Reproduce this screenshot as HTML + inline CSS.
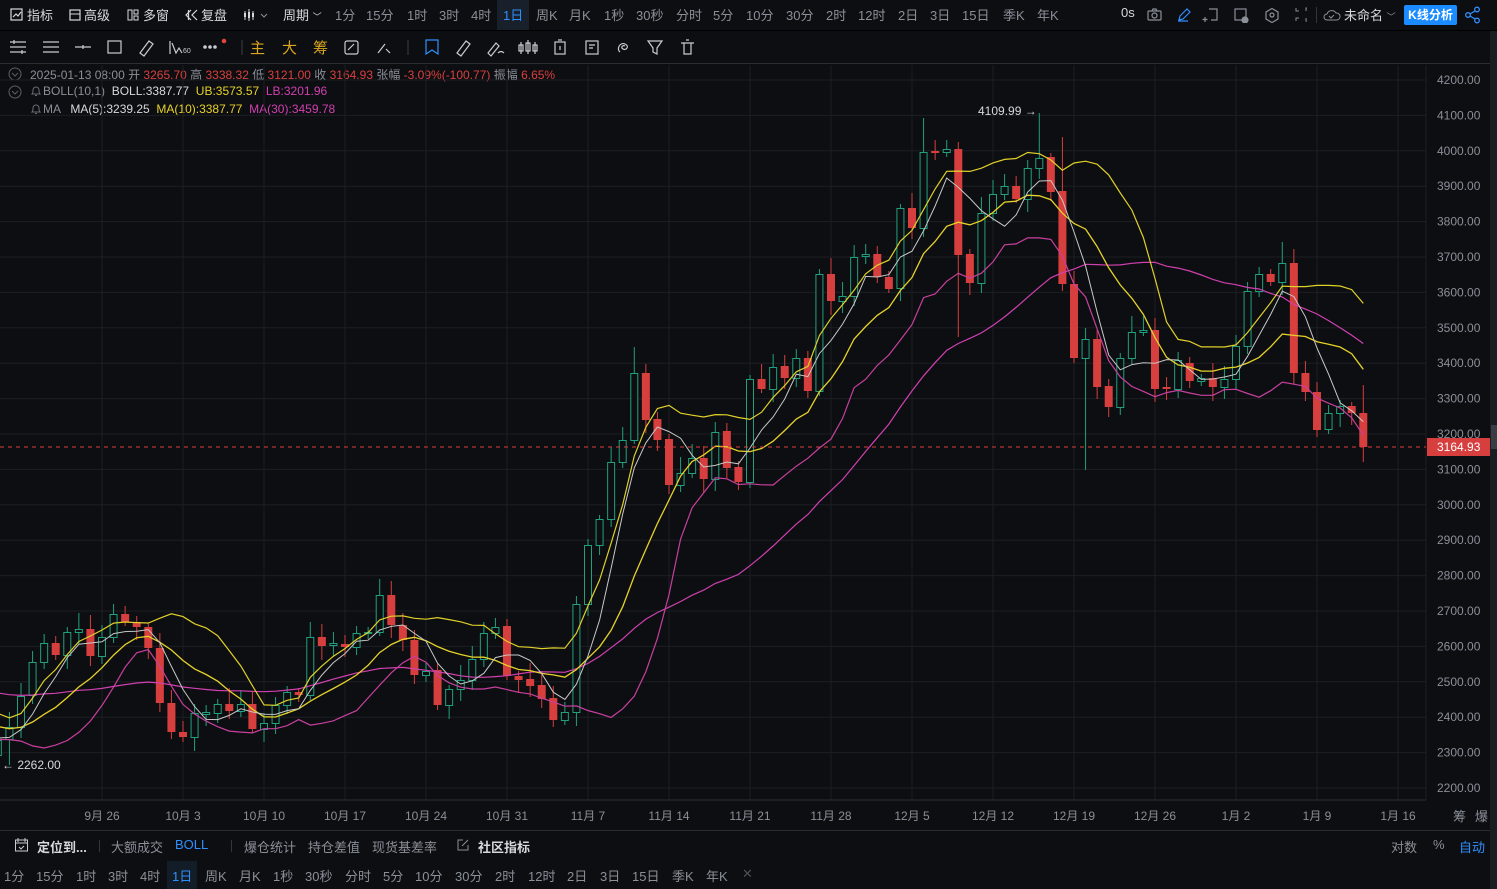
<!DOCTYPE html>
<html><head><meta charset="utf-8">
<style>
*{margin:0;padding:0;box-sizing:border-box}
body{width:1497px;height:889px;background:#0d0e11;font-family:"Liberation Sans","Noto Sans CJK SC",sans-serif;color:#8a8f98;overflow:hidden;position:relative}
.a{position:absolute;white-space:nowrap}
.t{font-size:13px;top:5px;color:#8a8f98}
.w{color:#d5d8dd}
.b{font-size:13px;top:866px;color:#8a8f98}
#topb{position:absolute;left:0;top:0;width:1497px;height:31px;border-bottom:1px solid #000;background:#0d0e11}
#tool{position:absolute;left:0;top:31px;width:1490px;height:33px;border-bottom:1px solid #2a2d33}
</style></head><body>
<div id="topb"></div>
<div id="tool"></div>
<div class="a" style="left:1490px;top:31px;width:7px;height:858px;background:#1b1d22"></div>
<div class="a" style="left:1491px;top:425px;width:6px;height:24px;background:#3a3d44"></div>

<!-- top bar -->
<svg class="a" style="left:10px;top:8px" width="14" height="14"><rect x="1" y="1" width="11" height="11" fill="none" stroke="#d5d8dd" stroke-width="1.2"/><path d="M3 9l3-3 2 2 3-4" fill="none" stroke="#d5d8dd" stroke-width="1.2"/></svg>
<div class="a t w" style="left:27px">指标</div>
<svg class="a" style="left:69px;top:8px" width="13" height="14"><rect x="1" y="2" width="10" height="10" fill="none" stroke="#d5d8dd" stroke-width="1.2"/><path d="M1 6h10" stroke="#d5d8dd"/></svg>
<div class="a t w" style="left:84px">高级</div>
<svg class="a" style="left:127px;top:8px" width="13" height="14"><rect x="1" y="2" width="4" height="10" fill="none" stroke="#d5d8dd"/><rect x="7" y="2" width="4" height="4" fill="none" stroke="#d5d8dd"/><rect x="7" y="8" width="4" height="4" fill="none" stroke="#d5d8dd"/></svg>
<div class="a t w" style="left:143px">多窗</div>
<svg class="a" style="left:185px;top:9px" width="14" height="12" fill="none" stroke="#d5d8dd" stroke-width="1.2"><path d="M6 1L1 6l5 5M12 1L7 6l5 5M3.5 1v10"/></svg>
<div class="a t w" style="left:201px">复盘</div>
<svg class="a" style="left:243px;top:8px" width="28" height="14"><path d="M2 3v9M6 1v12M10 3v9" stroke="#d5d8dd"/><rect x="1" y="5" width="2" height="4" fill="#d5d8dd"/><rect x="5" y="4" width="2" height="6" fill="#d5d8dd"/><rect x="9" y="5" width="2" height="4" fill="#d5d8dd"/><path d="M18 6l3 3 3-3" fill="none" stroke="#8a8f98"/></svg>
<div class="a t w" style="left:283px">周期 <span style="font-size:9px">﹀</span></div>
<div class="a t" style="left:335px">1分</div><div class="a t" style="left:366px">15分</div><div class="a t" style="left:407px">1时</div><div class="a t" style="left:439px">3时</div><div class="a t" style="left:471px">4时</div>
<div class="a" style="left:497px;top:0;width:32px;height:30px;background:#17202b"></div>
<div class="a t" style="left:503px;color:#2f8fff">1日</div>
<div class="a t" style="left:536px">周K</div><div class="a t" style="left:569px">月K</div><div class="a t" style="left:604px">1秒</div><div class="a t" style="left:636px">30秒</div><div class="a t" style="left:676px">分时</div><div class="a t" style="left:713px">5分</div><div class="a t" style="left:746px">10分</div><div class="a t" style="left:786px">30分</div><div class="a t" style="left:826px">2时</div><div class="a t" style="left:858px">12时</div><div class="a t" style="left:898px">2日</div><div class="a t" style="left:930px">3日</div><div class="a t" style="left:962px">15日</div><div class="a t" style="left:1003px">季K</div><div class="a t" style="left:1037px">年K</div>
<div class="a t w" style="left:1121px">0s</div>
<svg class="a" style="left:1147px;top:7px" width="160" height="16" fill="none" stroke="#8a8f98" stroke-width="1.2">
<rect x="1" y="4" width="13" height="9" rx="1"/><circle cx="7.5" cy="8.5" r="2.5"/><path d="M5 4l1-2h3l1 2"/>
<path d="M32 13l1-4 7-7 3 3-7 7z M31 14h10" stroke="#2f8fff"/>
<path d="M62 2h8v11h-6M58 10v5M55.5 12.5h5"/>
<rect x="88" y="2" width="11" height="11"/><circle cx="98" cy="13" r="3" fill="#8a8f98"/>
<path d="M125 1.5l6 3.5v7l-6 3.5-6-3.5v-7z"/><circle cx="125" cy="8" r="2"/>
<path d="M149 1v3h3M162 1h-3v3M149 14v-3h3M162 14h-3v-3" stroke-width="1"/>
</svg>
<div class="a" style="left:1316px;top:7px;width:1px;height:16px;background:#33363c"></div>
<svg class="a" style="left:1323px;top:9px" width="18" height="12"><path d="M4 11a3 3 0 010-6 5 5 0 019-1 3.5 3.5 0 011 7z" fill="none" stroke="#8a8f98"/><path d="M6 7l2 2 3-3" fill="none" stroke="#8a8f98"/></svg>
<div class="a t w" style="left:1344px">未命名 <span style="font-size:9px;color:#8a8f98">﹀</span></div>
<div class="a" style="left:1404px;top:5px;width:53px;height:20px;background:#1a8cff;border-radius:2px;color:#fff;font-size:12px;font-weight:bold;line-height:20px;text-align:center">K线分析</div>
<svg class="a" style="left:1464px;top:6px" width="18" height="18" fill="none" stroke="#2f8fff" stroke-width="1.3"><circle cx="13" cy="3.5" r="2.3"/><circle cx="4" cy="9" r="2.3"/><circle cx="13" cy="14.5" r="2.3"/><path d="M6 8l5-3M6 10l5 3"/></svg>

<!-- toolbar -->
<svg class="a" style="left:0;top:36px" width="700" height="22" fill="none" stroke="#c8ccd2" stroke-width="1.2">
<path d="M10 6h16M10 11h16M10 16h16M14 4v4M22 14v4"/>
<path d="M43 6h16M43 11h16M43 16h16"/>
<path d="M75 11h16M83 9v4"/>
<rect x="108" y="5" width="13" height="12"/>
<path d="M140 17l9-12 4 3-9 12z"/>
<path d="M170 5v13M172 7l4 10 3-5 3 5"/><text x="183" y="17" font-size="7" fill="#c8ccd2" stroke="none">60</text>
<circle cx="205" cy="11" r="1.2" fill="#c8ccd2"/><circle cx="210" cy="11" r="1.2" fill="#c8ccd2"/><circle cx="215" cy="11" r="1.2" fill="#c8ccd2"/>
<circle cx="224" cy="5" r="2.3" fill="#e0443e" stroke="none"/>
<path d="M242 4v15" stroke="#33363c"/>
<text x="250" y="17" font-size="15" fill="#d9a520" stroke="none" font-family="Noto Sans CJK SC">主</text>
<text x="282" y="17" font-size="15" fill="#d9a520" stroke="none" font-family="Noto Sans CJK SC">大</text>
<text x="313" y="17" font-size="15" fill="#d9a520" stroke="none" font-family="Noto Sans CJK SC">筹</text>
<rect x="345" y="5" width="13" height="13" rx="2"/><path d="M348 14l6-6"/>
<path d="M378 17l7-9M386 13l4 4"/>
<path d="M408 4v15" stroke="#33363c"/>
<path d="M426 4h12v14l-6-4-6 4z" stroke="#2f8fff"/>
<path d="M457 17l9-12 4 3-9 12z"/>
<path d="M488 17l8-10 3 3-8 10zM498 17c2-2 4-2 6 0"/>
<path d="M521 6v12M528 4v14M535 6v12"/><rect x="519" y="9" width="4" height="6"/><rect x="526" y="7" width="4" height="8"/><rect x="533" y="9" width="4" height="6"/>
<rect x="555" y="6" width="10" height="12"/><path d="M558 4h4M560 10v4"/>
<rect x="586" y="5" width="12" height="13"/><path d="M589 9h6M589 12h4"/>
<path d="M620 16c-4-3 0-10 5-8s1 7-2 5 0-4 2-3"/>
<path d="M648 5h14l-5 7v6l-4-2v-4z"/>
<path d="M681 7h13M684 7v11h7V7M686 4h3"/>
</svg>

<!-- legend -->
<svg class="a" style="left:8px;top:67px" width="16" height="42" fill="none" stroke="#5a5e66"><circle cx="7" cy="7" r="6"/><path d="M4 6l3 3 3-3"/><circle cx="7" cy="25" r="6"/><path d="M4 24l3 3 3-3"/></svg>
<svg class="a" style="left:30px;top:85px" width="12" height="30" fill="none" stroke="#6a6e76"><path d="M2 9c1-1 1-2 1-4a3 3 0 016 0c0 2 0 3 1 4zM5 10.5h2"/><path d="M2 27c1-1 1-2 1-4a3 3 0 016 0c0 2 0 3 1 4zM5 28.5h2"/></svg>
<div class="a" style="left:30px;top:66px;font-size:12px;color:#8a8f98">2025-01-13 08:00 开 <span style="color:#d9403f">3265.70</span> 高 <span style="color:#d9403f">3338.32</span> 低 <span style="color:#d9403f">3121.00</span> 收 <span style="color:#d9403f">3164.93</span> 张幅 <span style="color:#d9403f">-3.09%(-100.77)</span> 振幅 <span style="color:#d9403f">6.65%</span></div>
<div class="a" style="left:43px;top:84px;font-size:12px;color:#8a8f98">BOLL(10,1) &nbsp;<span style="color:#d5d8dd">BOLL:3387.77</span> &nbsp;<span style="color:#e6d22a">UB:3573.57</span> &nbsp;<span style="color:#d040b0">LB:3201.96</span></div>
<div class="a" style="left:43px;top:102px;font-size:12px;color:#8a8f98">MA &nbsp;&nbsp;<span style="color:#d5d8dd">MA(5):3239.25</span> &nbsp;<span style="color:#e6d22a">MA(10):3387.77</span> &nbsp;<span style="color:#d040b0">MA(30):3459.78</span></div>

<svg id="ch" class="a" style="left:0;top:65px" width="1490" height="765"></svg>

<!-- bottom -->
<div class="a" style="left:0;top:830px;width:1490px;height:1px;background:#2a2d33"></div>
<svg class="a" style="left:14px;top:837px" width="16" height="16" fill="none" stroke="#c8ccd2"><rect x="1.5" y="3" width="12" height="11"/><path d="M4 1v4M11 1v4M1.5 6h12M5 10l2 2 3-3"/></svg>
<div class="a" style="left:37px;top:837px;font-size:13px;font-weight:bold;color:#d5d8dd">定位到...</div>
<div class="a" style="left:99px;top:840px;width:1px;height:12px;background:#33363c"></div>
<div class="a" style="left:111px;top:837px;font-size:13px">大额成交</div>
<div class="a" style="left:175px;top:837px;font-size:13px;color:#2f8fff">BOLL</div>
<div class="a" style="left:231px;top:840px;width:1px;height:12px;background:#33363c"></div>
<div class="a" style="left:244px;top:837px;font-size:13px">爆仓统计</div>
<div class="a" style="left:308px;top:837px;font-size:13px">持仓差值</div>
<div class="a" style="left:372px;top:837px;font-size:13px">现货基差率</div>
<svg class="a" style="left:457px;top:839px" width="12" height="12" fill="none" stroke="#8a8f98"><path d="M6 1H1v10h10V6M5 7l6-6"/></svg>
<div class="a" style="left:478px;top:837px;font-size:13px;font-weight:bold;color:#d5d8dd">社区指标</div>
<div class="a" style="left:1391px;top:837px;font-size:13px">对数</div>
<div class="a" style="left:1433px;top:837px;font-size:13px">%</div>
<div class="a" style="left:1459px;top:837px;font-size:13px;color:#2f8fff">自动</div>
<div class="a" style="left:167px;top:861px;width:30px;height:28px;background:#131d27"></div>
<div class="a b" style="left:4px">1分</div><div class="a b" style="left:36px">15分</div><div class="a b" style="left:76px">1时</div><div class="a b" style="left:108px">3时</div><div class="a b" style="left:140px">4时</div><div class="a b" style="left:172px;color:#2f8fff">1日</div><div class="a b" style="left:205px">周K</div><div class="a b" style="left:239px">月K</div><div class="a b" style="left:273px">1秒</div><div class="a b" style="left:305px">30秒</div><div class="a b" style="left:345px">分时</div><div class="a b" style="left:383px">5分</div><div class="a b" style="left:415px">10分</div><div class="a b" style="left:455px">30分</div><div class="a b" style="left:495px">2时</div><div class="a b" style="left:528px">12时</div><div class="a b" style="left:567px">2日</div><div class="a b" style="left:600px">3日</div><div class="a b" style="left:632px">15日</div><div class="a b" style="left:672px">季K</div><div class="a b" style="left:706px">年K</div><div class="a b" style="left:742px;color:#4a4e56">✕</div>

<script>
const T=65;
const D=[
['g',740,755],['g',727,739],['g',696,727],['g',662,695],['g',643,662],['r',643,655],['g',632,655],['g',629,632],['r',629,656],['g',637,656],
['g',614,637],['r',614,622],['r',622,627],['r',627,648],['r',648,703],['r',703,732],['r',732,737],['g',713,737],['g',712,714],['g',704,713],
['r',704,711],['g',704,711],['r',704,729],['g',723,729],['g',705,723],['g',692,705],['r',692,695],['g',637,695],['r',637,646],['g',643,645],
['r',644,647],['g',633,647],['g',632,633],['g',595,632],['r',595,625],['r',625,640],['r',640,675],['g',671,675],['r',670,705],['g',689,705],
['g',680,689],['g',659,680],['g',633,659],['g',627,633],['r',626,676],['r',676,680],['r',679,686],['r',685,699],['r',698,720],['g',712,720],
['g',604,712],['g',545,604],['g',519,545],['g',462,519],['g',440,462],['g',373,440],['r',373,420],['r',419,440],['r',439,485],['g',473,485],
['g',458,473],['r',458,479],['g',432,479],['r',431,468],['r',467,482],['g',379,482],['r',379,389],['g',367,389],['r',366,378],['g',358,378],
['r',358,391],['g',274,391],['r',274,301],['g',296,301],['g',257,296],['g',254,256],['r',254,277],['r',277,289],['g',208,288],['r',208,228],
['g',152,228],['r',151,153],['g',149,152],['r',149,255],['r',254,283],['g',213,283],['g',194,213],['g',186,194],['r',186,199],['g',168,199],
['g',158,168],['r',157,192],['r',191,284],['r',284,358],['g',339,358],['r',339,387],['r',386,407],['g',358,407],['g',332,358],['g',330,332],
['r',330,389],['r',387,389],['g',360,389],['r',363,381],['g',378,381],['r',378,387],['g',379,387],['g',346,379],['g',291,346],['g',274,291],
['r',274,282],['g',263,282],['r',263,373],['r',373,392],['r',392,430],['g',413,429],['g',406,413],['r',406,413],['r',413,447]];
const ov={'-8':[null,765],'81':[113,null],'85':[null,470],'74':[null,337],'102':[242,null],'109':[385,462],'71':[118,null],'83':[137,null],'46':[347,null]};
const X=d=>102+d*11.5714;
let s='';
for(let k=0;k<=20;k++){const y=80+k*35.4-T;s+=`<line x1="0" x2="1426" y1="${y}" y2="${y}" stroke="#1d1f24"/>`;
 const p=(4200-k*100).toFixed(2);s+=`<text x="1437" y="${y+4}" font-size="12" fill="#8a8f98" font-family="Liberation Sans">${p}</text>`;}
const dates=['9月 26','10月 3','10月 10','10月 17','10月 24','10月 31','11月 7','11月 14','11月 21','11月 28','12月 5','12月 12','12月 19','12月 26','1月 2','1月 9','1月 16'];
dates.forEach((t,i)=>{const x=X(i*7);s+=`<line x1="${x}" x2="${x}" y1="0" y2="735" stroke="#1d1f24"/><text x="${x}" y="755" text-anchor="middle" font-size="12" fill="#8a8f98" font-family="Liberation Sans, Noto Sans CJK SC">${t}</text>`;});
s+=`<line x1="0" x2="1426" y1="735" y2="735" stroke="#2a2d33"/><line x1="1426" x2="1426" y1="0" y2="735" stroke="#1d1f24"/>`;
s+=`<text x="1453" y="756" font-size="13" fill="#8a8f98" font-family="Noto Sans CJK SC">筹</text><text x="1475" y="756" font-size="13" fill="#8a8f98" font-family="Noto Sans CJK SC">爆</text>`;
const cl=[];for(let i=0;i<20;i++)cl.push(675);for(let i=0;i<10;i++)cl.push(700+i*5);
D.forEach(c=>cl.push(c[0]=='g'?c[1]:c[2]));
const P=30;
function ma(n,i){let a=0;for(let j=i-n+1;j<=i;j++)a+=cl[j];return a/n;}
const L={m5:[],m10:[],m30:[],ub:[],lb:[]};
for(let k=0;k<D.length;k++){const i=k+P,x=X(k-9);const m=ma(10,i);let v=0;for(let j=i-9;j<=i;j++)v+=(cl[j]-m)**2;const sd=Math.sqrt(v/10);
L.m5.push([x,ma(5,i)]);L.m10.push([x,m]);L.m30.push([x,ma(30,i)]);L.ub.push([x,m-sd]);L.lb.push([x,m+sd]);}
D.forEach((c,k)=>{const d=k-9,x=X(d);const w=4+((k*37)%13);let hi=c[1]-w,lo=c[2]+4+((k*53)%11);
 const o=ov[String(d)];if(o){if(o[0])hi=o[0];if(o[1])lo=o[1];}
 const col=c[0]=='g'?'#20a07c':'#d63f3e';
 s+=`<line x1="${x}" x2="${x}" y1="${hi-T}" y2="${lo-T}" stroke="${col}"/>`;
 const h=Math.max(1,c[2]-c[1]);
 if(c[0]=='g')s+=`<rect x="${x-3.5}" y="${c[1]-T+0.5}" width="7" height="${h}" fill="#0d0e11" stroke="${col}"/>`;
 else s+=`<rect x="${x-4}" y="${c[1]-T}" width="8" height="${h}" fill="${col}"/>`;});
const pl=(a,c,w)=>`<polyline fill="none" stroke="${c}" stroke-width="${w}" points="${a.map(p=>p[0].toFixed(1)+','+(p[1]-T).toFixed(1)).join(' ')}"/>`;
s+=pl(L.m30,'#d040b0',1.2)+pl(L.lb,'#c8409f',1.2)+pl(L.ub,'#e0d02a',1.2)+pl(L.m10,'#e6d22a',1.3)+pl(L.m5,'#c8c8c8',1);
s+=`<line x1="0" x2="1426" y1="${447-T}" y2="${447-T}" stroke="#d63f3e" stroke-dasharray="4,4"/>`;
s+=`<rect x="1427" y="${438-T}" width="63" height="18" fill="#d63f3e"/><text x="1437" y="${451-T}" font-size="12" fill="#fff" font-family="Liberation Sans">3164.93</text>`;
s+=`<text x="978" y="${115-T}" font-size="12" fill="#d5d8dd" font-family="Liberation Sans">4109.99 →</text>`;
s+=`<text x="2" y="${769-T}" font-size="12" fill="#d5d8dd" font-family="Liberation Sans">← 2262.00</text>`;
document.getElementById('ch').innerHTML=s;
</script>
</body></html>
